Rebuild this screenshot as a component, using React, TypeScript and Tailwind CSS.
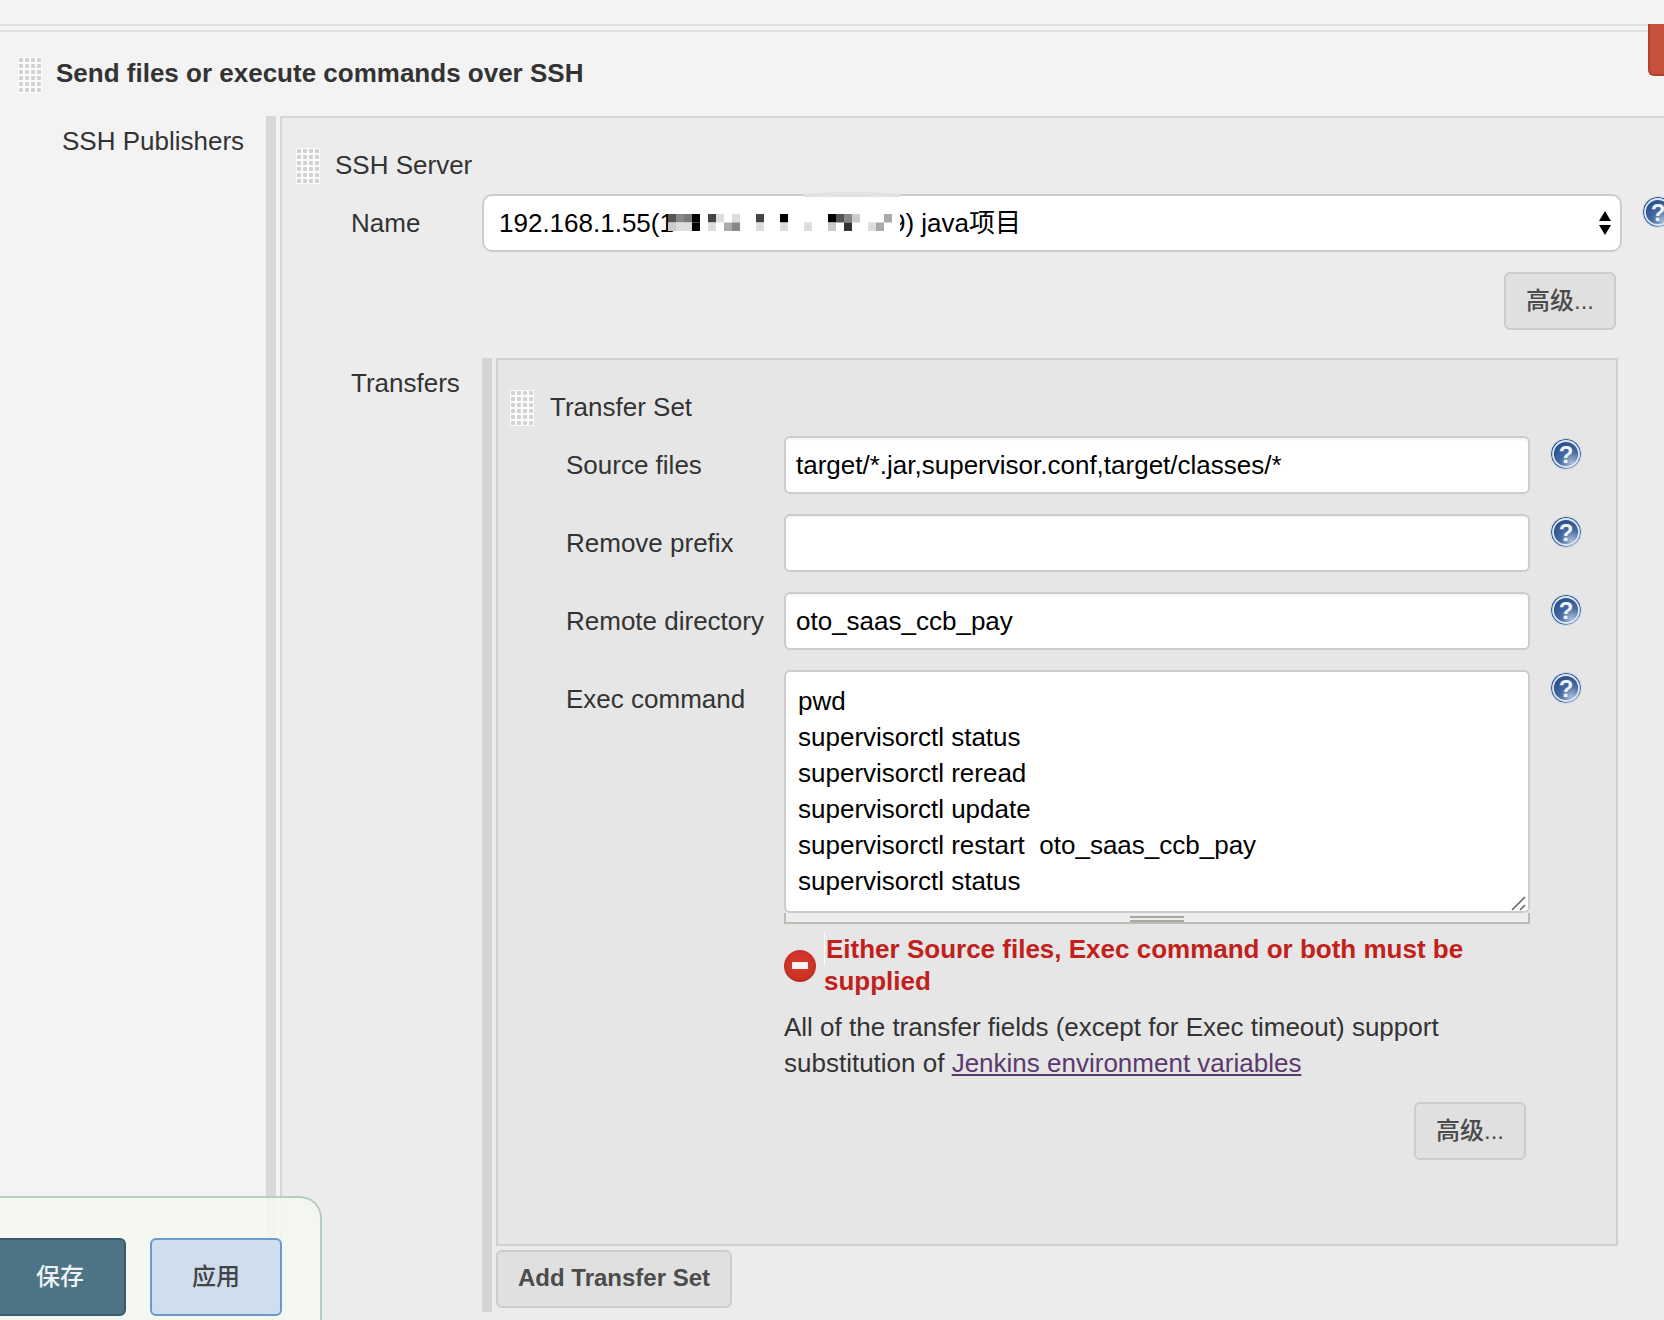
import { useId } from "react";

const sans = "font-['Liberation_Sans','Noto_Sans_CJK_SC',sans-serif]";

const mosaic: [number, number, string][] = [
  [0, 0, "#555"], [1, 0, "#888"], [2, 0, "#777"], [3, 0, "#000"], [5, 0, "#444"], [6, 0, "#ddd"],
  [8, 0, "#ddd"], [11, 0, "#444"], [14, 0, "#000"], [20, 0, "#000"], [21, 0, "#555"], [22, 0, "#888"], [23, 0, "#ccc"], [27, 0, "#aaa"],
  [0, 1, "#ccc"], [1, 1, "#ddd"], [2, 1, "#ddd"], [3, 1, "#000"], [5, 1, "#ddd"], [7, 1, "#aaa"],
  [8, 1, "#888"], [11, 1, "#ddd"], [14, 1, "#ddd"], [17, 1, "#ddd"], [20, 1, "#ccc"], [22, 1, "#333"], [25, 1, "#ddd"], [26, 1, "#aaa"],
];

function Grip() {
  const dots = [];
  for (let y = 0; y < 6; y++) {
    for (let x = 0; x < 4; x++) {
      dots.push(<rect key={`${x}-${y}`} x={1 + x * 6} y={1 + y * 6} width="4" height="4" rx="1" fill="#d2d2d2" />);
    }
  }
  return (
    <svg width="24" height="36" viewBox="0 0 24 36" className="shrink-0">
      <rect width="24" height="36" fill="#fbfbfb" />
      {dots}
    </svg>
  );
}

function HelpIcon() {
  const id = useId();
  return (
    <svg width="32" height="32" viewBox="0 0 32 32" className="shrink-0">
      <defs>
        <radialGradient id={id} cx="0.68" cy="0.8" r="0.85">
          <stop offset="0" stopColor="#a9bfdc" />
          <stop offset="0.45" stopColor="#45699f" />
          <stop offset="1" stopColor="#1f4684" />
        </radialGradient>
      </defs>
      <circle cx="16" cy="16" r="15.5" fill={`url(#${id})`} stroke="#dbe4f0" strokeWidth="1" />
      <circle cx="16" cy="16" r="13" fill="none" stroke="#dfe8f3" strokeWidth="1.8" />
      <text x="16" y="24.5" textAnchor="middle" fontSize="24" fontWeight="700" fill="#eef3f9" fontFamily="Liberation Sans, sans-serif">?</text>
    </svg>
  );
}

function ErrorIcon() {
  const id = useId();
  return (
    <svg width="32" height="32" viewBox="0 0 32 32" className="shrink-0">
      <defs>
        <radialGradient id={id} cx="0.5" cy="0.45" r="0.55">
          <stop offset="0" stopColor="#d8392c" />
          <stop offset="0.8" stopColor="#cd3227" />
          <stop offset="1" stopColor="#b52a22" />
        </radialGradient>
      </defs>
      <circle cx="16" cy="16" r="16" fill={`url(#${id})`} />
      <rect x="8" y="12" width="16" height="7" fill="#f8f2f0" />
    </svg>
  );
}

function GrayButton({ label, bold, className }: { label: string; bold?: boolean; className: string }) {
  return (
    <button
      className={`flex items-center justify-center rounded-[6px] border-2 border-[#cccccc] bg-[#e0e0e0] text-[24px] text-[#4c4c4c] ${bold ? "font-bold" : "font-medium"} ${className}`}
    >
      {label}
    </button>
  );
}

function Field({ label, value }: { label: string; value: string }) {
  return (
    <div className="flex h-[58px] pl-[68px]">
      <div className="flex w-[218px] items-center text-[26px] text-[#333]">{label}</div>
      <input
        readOnly
        value={value}
        className="h-[58px] w-[746px] rounded-[6px] border-2 border-[#cccccc] bg-white px-[10px] text-[26px] text-black outline-none shadow-[inset_0_2px_2px_rgba(0,0,0,0.05)]"
      />
      <div className="ml-[20px] pt-[2px]">
        <HelpIcon />
      </div>
    </div>
  );
}

export default function App() {
  return (
    <div className={`relative h-[1320px] w-[1664px] overflow-hidden bg-[#f3f3f3] ${sans}`}>
      {/* top rules */}
      <div className="pt-[24px]">
        <div className="h-[2px] bg-[#e0e0e0]" />
        <div className="mt-[4px] h-[2px] bg-[#e0e0e0]" />
      </div>
      {/* delete button sticking in from the edge */}
      <div className="absolute right-0 top-[24px] h-[52px] w-[16px] rounded-bl-[6px] border-b-2 border-l-2 border-[#b0402f] bg-[#c5523f]" />

      <div className="mt-[25px] flex h-[36px] items-center pl-[18px]">
        <Grip />
        <div className="ml-[14px] pb-[4px] text-[26px] font-bold text-[#333]">Send files or execute commands over SSH</div>
      </div>

      <div className="mt-[23px] flex h-[1204px]">
        <div className="w-[266px] shrink-0 pl-[62px] pt-[7px] text-[26px] leading-[36px] text-[#333]">SSH Publishers</div>
        <div className="w-[10px] shrink-0 bg-[#d8d8d8]" />
        <div className="ml-[4px] w-[1384px] shrink-0 border-l-2 border-t-2 border-[#d6d6d6] bg-[#ececec] pl-[14px] pt-[30px]">
          <div className="flex h-[36px] items-center">
            <Grip />
            <div className="ml-[15px] pb-[2px] text-[26px] text-[#333]">SSH Server</div>
          </div>

          <div className="mt-[10px] flex h-[58px] pl-[55px]">
            <div className="flex w-[131px] shrink-0 items-center text-[26px] text-[#333]">Name</div>
            <div className="relative flex h-[58px] w-[1140px] shrink-0 items-center rounded-[10px] border-2 border-[#cccccc] bg-white pl-[15px] text-[26px] text-black">
              <span>192.168.1.55(1</span>
              <svg width="232" height="18" viewBox="0 0 232 18" className="relative z-10 ml-[-6px] shrink-0">
                <rect x="221" width="11" height="18" fill="#fff" />
                {mosaic.map(([x, y, fill], i) => (
                  <rect key={i} x={x * 8} y={y * 8.5} width="8" height="8.5" fill={fill} />
                ))}
              </svg>
              <span className="ml-[-9px]">9) java项目</span>
              <svg width="14" height="24" viewBox="0 0 14 24" className="absolute right-[8px] top-[15px]">
                <path d="M7 0l6 10H1zM1 14h12l-6 10z" fill="#000" />
              </svg>
              <div className="absolute left-[320px] top-[-4px] h-[5px] w-[96px] rounded-t-[50%] bg-[#e2e2e2]" />
            </div>
            <div className="ml-[20px] shrink-0 pt-[2px]">
              <HelpIcon />
            </div>
          </div>

          <div className="mt-[20px] flex w-[1320px] justify-end">
            <GrayButton label="高级..." className="h-[58px] w-[112px]" />
          </div>

          <div className="mt-[28px] flex pl-[55px]">
            <div className="w-[131px] shrink-0 pt-[7px] text-[26px] leading-[36px] text-[#333]">Transfers</div>
            <div className="w-[10px] shrink-0 bg-[#d4d4d4]" />
            <div className="ml-[4px] flex w-[1122px] shrink-0 flex-col pb-[4px]">
              <div className="h-[888px] border-2 border-[#d0d0d0] bg-[#e6e6e6] pt-[30px]">
                <div className="flex h-[36px] items-center pl-[12px]">
                  <Grip />
                  <div className="ml-[16px] pb-[2px] text-[26px] text-[#333]">Transfer Set</div>
                </div>
                <div className="mt-[10px] flex flex-col gap-[20px]">
                  <Field label="Source files" value="target/*.jar,supervisor.conf,target/classes/*" />
                  <Field label="Remove prefix" value="" />
                  <Field label="Remote directory" value="oto_saas_ccb_pay" />
                  <div className="flex pl-[68px]">
                    <div className="w-[218px] pt-[11px] text-[26px] leading-[36px] text-[#333]">Exec command</div>
                    <div className="w-[746px]">
                      <div className="relative">
                        <textarea
                          readOnly
                          value={"pwd\nsupervisorctl status\nsupervisorctl reread\nsupervisorctl update\nsupervisorctl restart  oto_saas_ccb_pay\nsupervisorctl status"}
                          className="block h-[243px] w-full resize-none rounded-[6px] border-2 border-[#cccccc] bg-white px-[12px] pt-[11px] text-[26px] leading-[36px] text-black outline-none"
                        />
                        <svg width="16" height="16" viewBox="0 0 16 16" className="absolute bottom-[2px] right-[3px]">
                          <path d="M1 15L14 2M9 15l5-5" stroke="#666" strokeWidth="1.6" fill="none" />
                        </svg>
                      </div>
                      <div className="flex h-[11px] justify-center border-x-2 border-b-2 border-[#bcbcb4] bg-[#ededed] pt-[3px]">
                        <div className="h-[6px] w-[54px] border-y-2 border-[#a8a8a4]" />
                      </div>
                      <div className="mt-[10px] flex">
                        <div className="pt-[16px]">
                          <ErrorIcon />
                        </div>
                        <div className="ml-[8px] mt-[-1px] w-[670px] text-[26px] font-bold leading-[32px] text-[#c2201a]">
                          <div className="w-fit border-l border-white pl-px">Either Source files, Exec command or both must be</div>
                          <div>supplied</div>
                        </div>
                      </div>
                      <div className="mt-[12px] text-[26px] leading-[36px] text-[#333]">
                        <div>All of the transfer fields (except for Exec timeout) support</div>
                        <div>
                          substitution of <a href="#" className="text-[#5a3a6e] underline">Jenkins environment variables</a>
                        </div>
                      </div>
                      <div className="mt-[21px] flex justify-end pr-[4px]">
                        <GrayButton label="高级..." className="h-[58px] w-[112px]" />
                      </div>
                    </div>
                    <div className="ml-[20px] pt-[2px]">
                      <HelpIcon />
                    </div>
                  </div>
                </div>
              </div>
              <GrayButton label="Add Transfer Set" bold className="mt-[4px] h-[58px] w-[236px] pb-[2px]" />
            </div>
          </div>
        </div>
      </div>

      {/* sticky save bar */}
      <div className="absolute bottom-0 left-0 h-[124px] w-[322px] rounded-tr-[22px] border-r-2 border-t-2 border-[#b5cfbe] bg-[#f5f8f1]/90 pt-[40px]">
        <div className="flex">
          <button className="ml-[-6px] h-[78px] w-[132px] rounded-[6px] border-2 border-[#3b5a6b] bg-[#4d7485] text-[24px] font-medium text-[#eef2f4]">保存</button>
          <button className="ml-[24px] h-[78px] w-[132px] rounded-[6px] border-2 border-[#6d9acc] bg-[#cfddee] text-[24px] font-medium text-[#444]">应用</button>
        </div>
      </div>
    </div>
  );
}
